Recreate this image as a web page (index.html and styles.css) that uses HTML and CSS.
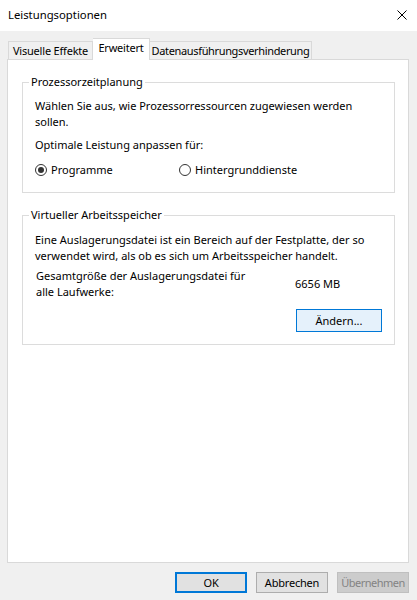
FILE: index.html
```html
<!DOCTYPE html>
<html lang="de">
<head>
<meta charset="utf-8">
<title>Leistungsoptionen</title>
<link rel="stylesheet" href="styles.css">
</head>
<body>
<div class="window">
  <header class="titlebar">
    <span class="title">Leistungsoptionen</span>
    <svg class="close" width="10" height="10" viewBox="0 0 10 10" aria-hidden="true">
      <path d="M0.5 0.5 L9.5 9.5 M9.5 0.5 L0.5 9.5" stroke="#000" stroke-width="1" fill="none"/>
    </svg>
  </header>

  <nav class="tabs">
    <div class="tab tab-1">Visuelle Effekte</div>
    <div class="tab tab-active">Erweitert</div>
    <div class="tab tab-3">Datenausführungsverhinderung</div>
  </nav>

  <main class="panel">
    <fieldset class="group group-cpu">
      <legend>Prozessorzeitplanung</legend>
      <p class="line">Wählen Sie aus, wie Prozessorressourcen zugewiesen werden<br>sollen.</p>
      <p class="line label-opt">Optimale Leistung anpassen für:</p>
      <div class="radios">
        <label class="radio"><span class="dot checked"></span>Programme</label>
        <label class="radio radio-2"><span class="dot"></span>Hintergrunddienste</label>
      </div>
    </fieldset>

    <fieldset class="group group-mem">
      <legend>Virtueller Arbeitsspeicher</legend>
      <p class="line">Eine Auslagerungsdatei ist ein Bereich auf der Festplatte, der so<br>verwendet wird, als ob es sich um Arbeitsspeicher handelt.</p>
      <div class="size-row">
        <span class="size-label">Gesamtgröße der Auslagerungsdatei für<br>alle Laufwerke:</span>
        <span class="size-value">6656 MB</span>
      </div>
      <div class="change-row">
        <button class="btn btn-change">Ändern...</button>
      </div>
    </fieldset>
  </main>

  <footer class="buttons">
    <button class="btn btn-default">OK</button>
    <button class="btn">Abbrechen</button>
    <button class="btn btn-disabled">Übernehmen</button>
  </footer>
</div>
</body>
</html>
```
FILE: styles.css
```css
* { box-sizing: border-box; }

html, body {
  margin: 0;
  padding: 0;
}

body {
  background: #f0f0f0;
  font-family: "Noto Sans", "Open Sans", sans-serif;
  font-size: 11px;
  line-height: 16px;
  color: #000;
}

.window {
  height: 600px;
  display: flex;
  flex-direction: column;
}

.titlebar {
  height: 31px;
  flex: none;
  background: #fff;
  display: flex;
  align-items: center;
  justify-content: space-between;
  padding: 0 10px 0 8px;
}

.title {
  font-size: 11.3px;
  padding-bottom: 1px;
}

.close {
  display: block;
  margin-top: -1px;
}

.tabs {
  flex: none;
  display: flex;
  align-items: flex-end;
  height: 22px;
  margin: 7px 0 -1px 8px;
  position: relative;
  z-index: 1;
}

.tab {
  flex: none;
  height: 19px;
  padding: 1px 0 0;
  border: 1px solid #d9d9d9;
  background: #f0f0f0;
  text-align: center;
  white-space: nowrap;
  overflow: hidden;
  letter-spacing: -0.2px;
}

.tab-1 {
  width: 85px;
}

.tab-3 {
  width: 162px;
  border-left: none;
  letter-spacing: -0.35px;
}

.tab-active {
  width: 57px;
  height: 22px;
  padding-top: 1px;
  border-bottom: none;
  border-left: none;
  background: #fff;
}

.panel {
  flex: 1;
  margin: 0 8px 0 7px;
  background: #fff;
  border: 1px solid #d9d9d9;
  padding: 14px 13px 0 14px;
}

.group {
  margin: 0;
  border: 1px solid #dcdcdc;
  padding: 0 12px 14px 12px;
  min-width: 0;
}

.group legend {
  padding: 0 2px;
  margin-left: -6px;
  line-height: 16px;
}

.line {
  margin: 0;
}

.group-cpu .line:first-of-type {
  margin-top: 8px;
}

.label-opt {
  margin-top: 7px;
}

.radios {
  display: flex;
  margin-top: 9px;
  height: 16px;
}

.radio {
  display: flex;
  align-items: center;
  gap: 4px;
  width: 144px;
}

.dot {
  width: 12px;
  height: 12px;
  border: 1px solid #333;
  border-radius: 50%;
  display: flex;
  align-items: center;
  justify-content: center;
  background: #fff;
}

.dot.checked::after {
  content: "";
  width: 6px;
  height: 6px;
  border-radius: 50%;
  background: #333;
}

.group-mem {
  margin-top: 14px;
  padding-bottom: 12px;
}

.group-mem .line {
  margin-top: 9px;
}

.size-row {
  display: grid;
  grid-template-columns: 259px auto;
  align-items: center;
  margin-top: 4px;
  padding-left: 1px;
}

.change-row {
  display: flex;
  justify-content: flex-end;
  margin-top: 9px;
}

.btn {
  font-family: inherit;
  font-size: 11px;
  line-height: 16px;
  color: #000;
  background: #e1e1e1;
  border: 1px solid #adadad;
  padding: 0;
  height: 21px;
  width: 72px;
  margin: 0;
  letter-spacing: -0.2px;
}

.btn-change {
  width: 86px;
  height: 23px;
  background: #e5f1fb;
  border-color: #0078d7;
  letter-spacing: 0;
}

.buttons {
  flex: none;
  display: flex;
  justify-content: flex-end;
  gap: 9px;
  margin: 9px 8px 7px 0;
}

.btn-default {
  border: 2px solid #0078d7;
}

.btn-disabled {
  background: #cccccc;
  border-color: #bfbfbf;
  color: #838383;
  letter-spacing: -0.5px;
}
```
